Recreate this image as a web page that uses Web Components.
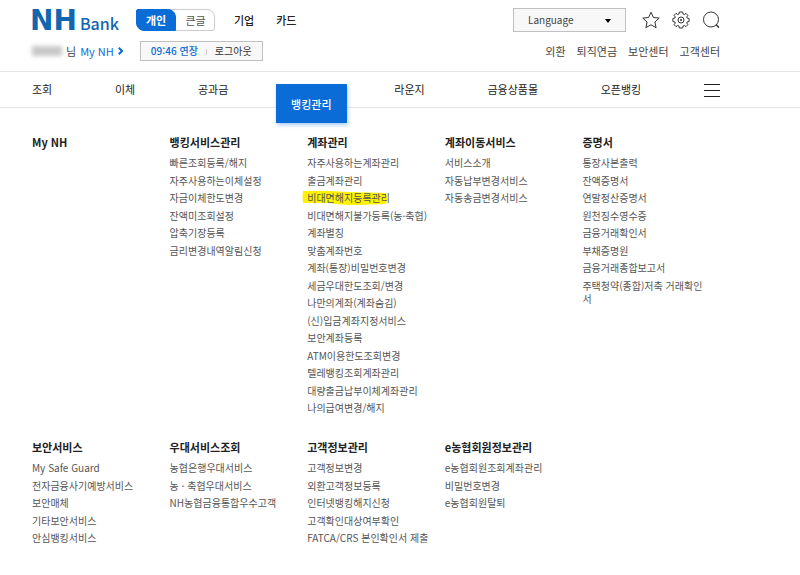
<!DOCTYPE html>
<html lang="ko">
<head>
<meta charset="utf-8">
<meta name="viewport" content="width=device-width, initial-scale=1">
<title>NH Bank</title>
<style>
  body {
    margin: 0;
    background: #fff;
    color: #333;
    font: 11px/16px "Noto Sans CJK KR", sans-serif;
    --blue: #0a6cd6;
    --page-left: 32px;
    --page-right: 80px;
  }
</style>
</head>
<body>

<template id="bankHeaderTmpl">
  <style>
    :host {
      display: block;
      padding: 8px var(--page-right) 10px var(--page-left);
    }

    .row {
      display: flex;
      align-items: center;
      justify-content: space-between;
    }

    .top { height: 23px; }
    .sub { height: 20px; margin-top: 10px; }

    .group {
      display: flex;
      align-items: center;
    }

    a { color: inherit; text-decoration: none; }

    button {
      margin: 0;
      padding: 0;
      border: 0;
      background: none;
      color: inherit;
      font: inherit;
      cursor: pointer;
    }

    .links { gap: 22px; margin-left: 19px; font-weight: 500; color: #222; }

    .name {
      width: 30px;
      height: 10px;
      background: #c8c8c8;
      filter: blur(2px);
    }

    .user { gap: 4px; color: #444; }
    .user a { display: flex; align-items: center; gap: 4px; color: var(--blue); }
    .user svg { width: 5px; height: 8px; fill: none; stroke: currentColor; stroke-width: 2; }

    .session {
      box-sizing: border-box;
      height: 20px;
      margin-left: 17px;
      padding: 0 10px;
      border: 1px solid #c0c0c0;
      background: #f8f8f8;
      font-size: 10px;
    }
    .session .extend { color: var(--blue); font-weight: 500; }
    .session .extend::after {
      content: "";
      display: inline-block;
      width: 1px;
      height: 6px;
      margin: 0 8px;
      background: #ccc;
    }

    .tools { gap: 12px; }
    .tools button { display: flex; }
    .tools svg { width: 18px; height: 18px; fill: none; stroke: #333; stroke-width: 1; }

    .help { gap: 11px; color: #444; }
  </style>
  <div class="row top">
    <div class="group">
      <bank-logo></bank-logo>
      <mode-switch></mode-switch>
      <nav class="group links">
        <a href="#">기업</a>
        <a href="#">카드</a>
      </nav>
    </div>
    <div class="group tools">
      <language-select></language-select>
      <button type="button" aria-label="즐겨찾기">
        <svg viewBox="0 0 18 18"><path d="M9 1.2 11.4 6.5 17.2 7.1 12.9 11 14.1 16.7 9 13.8 3.9 16.7 5.1 11 .8 7.1 6.6 6.5z"/></svg>
      </button>
      <button type="button" aria-label="설정">
        <svg viewBox="0 0 18 18">
          <path d="M7.4 1H10.6L11.1 3 12.3 3.5 14 2.4 15.9 4.3 14.7 6 15.2 7.1 17.1 7.5V10.5L15.2 10.9 14.7 12 15.9 13.7 14 15.6 12.3 14.5 11.1 15 10.6 17H7.4L6.9 15 5.7 14.5 4 15.6 2.1 13.7 3.3 12 2.8 10.9 .9 10.5V7.5L2.8 7.1 3.3 6 2.1 4.3 4 2.4 5.7 3.5 6.9 3z" stroke-linejoin="round"/>
          <circle cx="9" cy="9" r="3"/>
          <circle cx="9" cy="9" r="1" fill="#333" stroke="none"/>
        </svg>
      </button>
      <button type="button" aria-label="검색">
        <svg viewBox="0 0 18 18"><circle cx="9" cy="8.5" r="7.5"/><path d="M14 13.5 17 16.5" stroke-width="1.5"/></svg>
      </button>
    </div>
  </div>
  <div class="row sub">
    <div class="group">
      <div class="group user">
        <span class="name"></span>
        <span>님</span>
        <a href="#">My NH <svg viewBox="0 0 5 8"><path d="M.8 .8 4 4 .8 7.2"/></svg></a>
      </div>
      <div class="group session">
        <button class="extend" type="button">09:46 연장</button>
        <button type="button">로그아웃</button>
      </div>
    </div>
    <nav class="group help">
      <a href="#">외환</a>
      <a href="#">퇴직연금</a>
      <a href="#">보안센터</a>
      <a href="#">고객센터</a>
    </nav>
  </div>
</template>

<template id="bankLogoTmpl">
  <style>
    :host { display: block; width: 104px; padding-top: 4px; }
    a {
      display: flex;
      align-items: baseline;
      gap: 3px;
      margin-left: -2px;
      color: #1266b0;
      line-height: 23px;
      text-decoration: none;
    }
    .mark { font-family: "DejaVu Sans", sans-serif; font-size: 28px; font-weight: 700; }
    .word { font-size: 16px; font-weight: 500; }
  </style>
  <a href="#"><span class="mark">NH</span><span class="word">Bank</span></a>
</template>

<template id="modeSwitchTmpl">
  <style>
    :host { display: flex; height: 22px; }
    button {
      box-sizing: border-box;
      width: 47px;
      margin: 0 0 0 -8px;
      padding: 0 0 0 8px;
      border: 1px solid #ccc;
      border-radius: 0 8px 3px 0;
      background: #fff;
      color: #555;
      font: inherit;
    }
    .on {
      position: relative;
      width: 40px;
      margin: 0;
      padding: 0;
      border-color: var(--blue);
      border-radius: 2px 8px 1px 8px;
      background: var(--blue);
      color: #fff;
      font-weight: 700;
    }
  </style>
  <button class="on" type="button" aria-pressed="true">개인</button>
  <button type="button" aria-pressed="false">큰글</button>
</template>

<template id="languageSelectTmpl">
  <style>
    :host { display: block; position: relative; margin-right: 4px; }
    select {
      display: block;
      box-sizing: border-box;
      width: 113px;
      height: 24px;
      padding: 0 14px;
      border: 1px solid #c0c0c0;
      border-radius: 0;
      background: #f8f8f8;
      color: #444;
      font: inherit;
      font-size: 10px;
      appearance: none;
    }
    :host::after {
      content: "";
      position: absolute;
      top: 11px;
      right: 15px;
      border: 3px solid transparent;
      border-top: 4px solid #000;
      border-bottom: 0;
      pointer-events: none;
    }
  </style>
  <select aria-label="Language"><option>Language</option></select>
</template>

<template id="mainNavTmpl">
  <style>
    :host {
      display: flex;
      justify-content: space-between;
      height: 35px;
      padding: 0 var(--page-right) 0 var(--page-left);
      border-top: 1px solid #e4e4e4;
      border-bottom: 1px solid #e4e4e4;
    }
    ::slotted(a) {
      color: #222;
      line-height: 35px;
      text-decoration: none;
    }
    ::slotted(a[aria-current]) {
      height: 39px;
      margin: 12px -15px 0;
      padding: 0 15px;
      background: var(--blue);
      box-shadow: 1px 2px 4px #a9cdf3;
      color: #fff;
      font-weight: 500;
      line-height: 40px;
    }
    button {
      width: 16px;
      padding: 0;
      border: 0;
      background: none;
    }
    svg { display: block; width: 16px; height: 14px; stroke: #222; }
  </style>
  <slot></slot>
  <button type="button" aria-label="전체메뉴">
    <svg viewBox="0 0 16 14"><path d="M0 1.5h16M0 7.5h16M0 13.5h16"/></svg>
  </button>
</template>

<template id="siteMapTmpl">
  <style>
    :host {
      display: grid;
      grid-template-columns: repeat(5, 1fr);
      row-gap: 20px;
      padding: 26px var(--page-right) 26px var(--page-left);
    }
  </style>
  <slot></slot>
</template>

<template id="menuGroupTmpl">
  <style>
    :host { display: block; padding-right: 16px; }
    h2 {
      margin: 0 0 5px;
      color: #222;
      font-size: 11px;
      font-weight: 700;
      line-height: 17px;
    }
    ul { margin: 0; padding: 0; list-style: none; }
  </style>
  <h2></h2>
  <ul role="list"><slot></slot></ul>
</template>

<template id="menuItemTmpl">
  <style>
    :host {
      display: block;
      margin-bottom: 5px;
      color: #555;
      font-size: 10px;
      line-height: 13px;
      word-break: break-all;
    }
    :host(:nth-child(even)) { margin-bottom: 4px; }
    a { position: relative; color: inherit; text-decoration: none; }
    svg { display: none; }
    /* highlighter pen stroke under the text */
    :host([marked]) svg {
      display: block;
      position: absolute;
      z-index: -1;
      top: 0;
      left: -5px;
      width: 86px;
      height: 16px;
      fill: #fff200;
    }
  </style>
  <a href="#"><svg viewBox="0 0 86 16"><path d="M1 1Q20 0 45 2L84 3Q86 9 84 14L55 15Q38 15 28 13L1 13Q0 7 1 1z"/></svg><slot></slot></a>
</template>

<bank-header></bank-header>

<main-nav role="navigation">
  <a href="#">조회</a>
  <a href="#">이체</a>
  <a href="#">공과금</a>
  <a href="#" aria-current="page">뱅킹관리</a>
  <a href="#">라운지</a>
  <a href="#">금융상품몰</a>
  <a href="#">오픈뱅킹</a>
</main-nav>

<site-map>
  <menu-group heading="My NH"></menu-group>
  <menu-group heading="뱅킹서비스관리">
    <menu-item>빠른조회등록/해지</menu-item>
    <menu-item>자주사용하는이체설정</menu-item>
    <menu-item>자금이체한도변경</menu-item>
    <menu-item>잔액미조회설정</menu-item>
    <menu-item>압축기장등록</menu-item>
    <menu-item>금리변경내역알림신청</menu-item>
  </menu-group>
  <menu-group heading="계좌관리">
    <menu-item>자주사용하는계좌관리</menu-item>
    <menu-item>출금계좌관리</menu-item>
    <menu-item marked>비대면해지등록관리</menu-item>
    <menu-item>비대면해지불가등록(농·축협)</menu-item>
    <menu-item>계좌별칭</menu-item>
    <menu-item>맞춤계좌번호</menu-item>
    <menu-item>계좌(통장)비밀번호변경</menu-item>
    <menu-item>세금우대한도조회/변경</menu-item>
    <menu-item>나만의계좌(계좌숨김)</menu-item>
    <menu-item>(신)입금계좌지정서비스</menu-item>
    <menu-item>보안계좌등록</menu-item>
    <menu-item>ATM이용한도조회변경</menu-item>
    <menu-item>텔레뱅킹조회계좌관리</menu-item>
    <menu-item>대량출금납부이체계좌관리</menu-item>
    <menu-item>나의급여변경/해지</menu-item>
  </menu-group>
  <menu-group heading="계좌이동서비스">
    <menu-item>서비스소개</menu-item>
    <menu-item>자동납부변경서비스</menu-item>
    <menu-item>자동송금변경서비스</menu-item>
  </menu-group>
  <menu-group heading="증명서">
    <menu-item>통장사본출력</menu-item>
    <menu-item>잔액증명서</menu-item>
    <menu-item>연말정산증명서</menu-item>
    <menu-item>원천징수영수증</menu-item>
    <menu-item>금융거래확인서</menu-item>
    <menu-item>부채증명원</menu-item>
    <menu-item>금융거래종합보고서</menu-item>
    <menu-item>주택청약(종합)저축 거래확인서</menu-item>
  </menu-group>
  <menu-group heading="보안서비스">
    <menu-item>My Safe Guard</menu-item>
    <menu-item>전자금융사기예방서비스</menu-item>
    <menu-item>보안매체</menu-item>
    <menu-item>기타보안서비스</menu-item>
    <menu-item>안심뱅킹서비스</menu-item>
  </menu-group>
  <menu-group heading="우대서비스조회">
    <menu-item>농협은행우대서비스</menu-item>
    <menu-item>농 · 축협우대서비스</menu-item>
    <menu-item>NH농협금융통합우수고객</menu-item>
  </menu-group>
  <menu-group heading="고객정보관리">
    <menu-item>고객정보변경</menu-item>
    <menu-item>외환고객정보등록</menu-item>
    <menu-item>인터넷뱅킹해지신청</menu-item>
    <menu-item>고객확인대상여부확인</menu-item>
    <menu-item>FATCA/CRS 본인확인서 제출</menu-item>
  </menu-group>
  <menu-group heading="e농협회원정보관리">
    <menu-item>e농협회원조회계좌관리</menu-item>
    <menu-item>비밀번호변경</menu-item>
    <menu-item>e농협회원탈퇴</menu-item>
  </menu-group>
</site-map>

<script>
    // Clones the element's template into an open shadow root
    class TemplateElement extends HTMLElement {
        constructor() {
            super();
            const t = document.querySelector(this.constructor.template);
            this.attachShadow({mode: 'open'}).appendChild(t.content.cloneNode(true));
        }
    }

    class BankLogo extends TemplateElement {
        static template = '#bankLogoTmpl';
    }

    class ModeSwitch extends TemplateElement {
        static template = '#modeSwitchTmpl';
    }

    class LanguageSelect extends TemplateElement {
        static template = '#languageSelectTmpl';
    }

    class BankHeader extends TemplateElement {
        static template = '#bankHeaderTmpl';
    }

    class MainNav extends TemplateElement {
        static template = '#mainNavTmpl';
    }

    class SiteMap extends TemplateElement {
        static template = '#siteMapTmpl';
    }

    class MenuGroup extends TemplateElement {
        static template = '#menuGroupTmpl';

        connectedCallback() {
            this.shadowRoot.querySelector('h2').textContent = this.getAttribute('heading');
        }
    }

    class MenuItem extends TemplateElement {
        static template = '#menuItemTmpl';

        connectedCallback() {
            this.setAttribute('role', 'listitem');
        }
    }

    window.customElements.define('bank-logo', BankLogo);
    window.customElements.define('mode-switch', ModeSwitch);
    window.customElements.define('language-select', LanguageSelect);
    window.customElements.define('bank-header', BankHeader);
    window.customElements.define('main-nav', MainNav);
    window.customElements.define('site-map', SiteMap);
    window.customElements.define('menu-group', MenuGroup);
    window.customElements.define('menu-item', MenuItem);
</script>
</body>
</html>
